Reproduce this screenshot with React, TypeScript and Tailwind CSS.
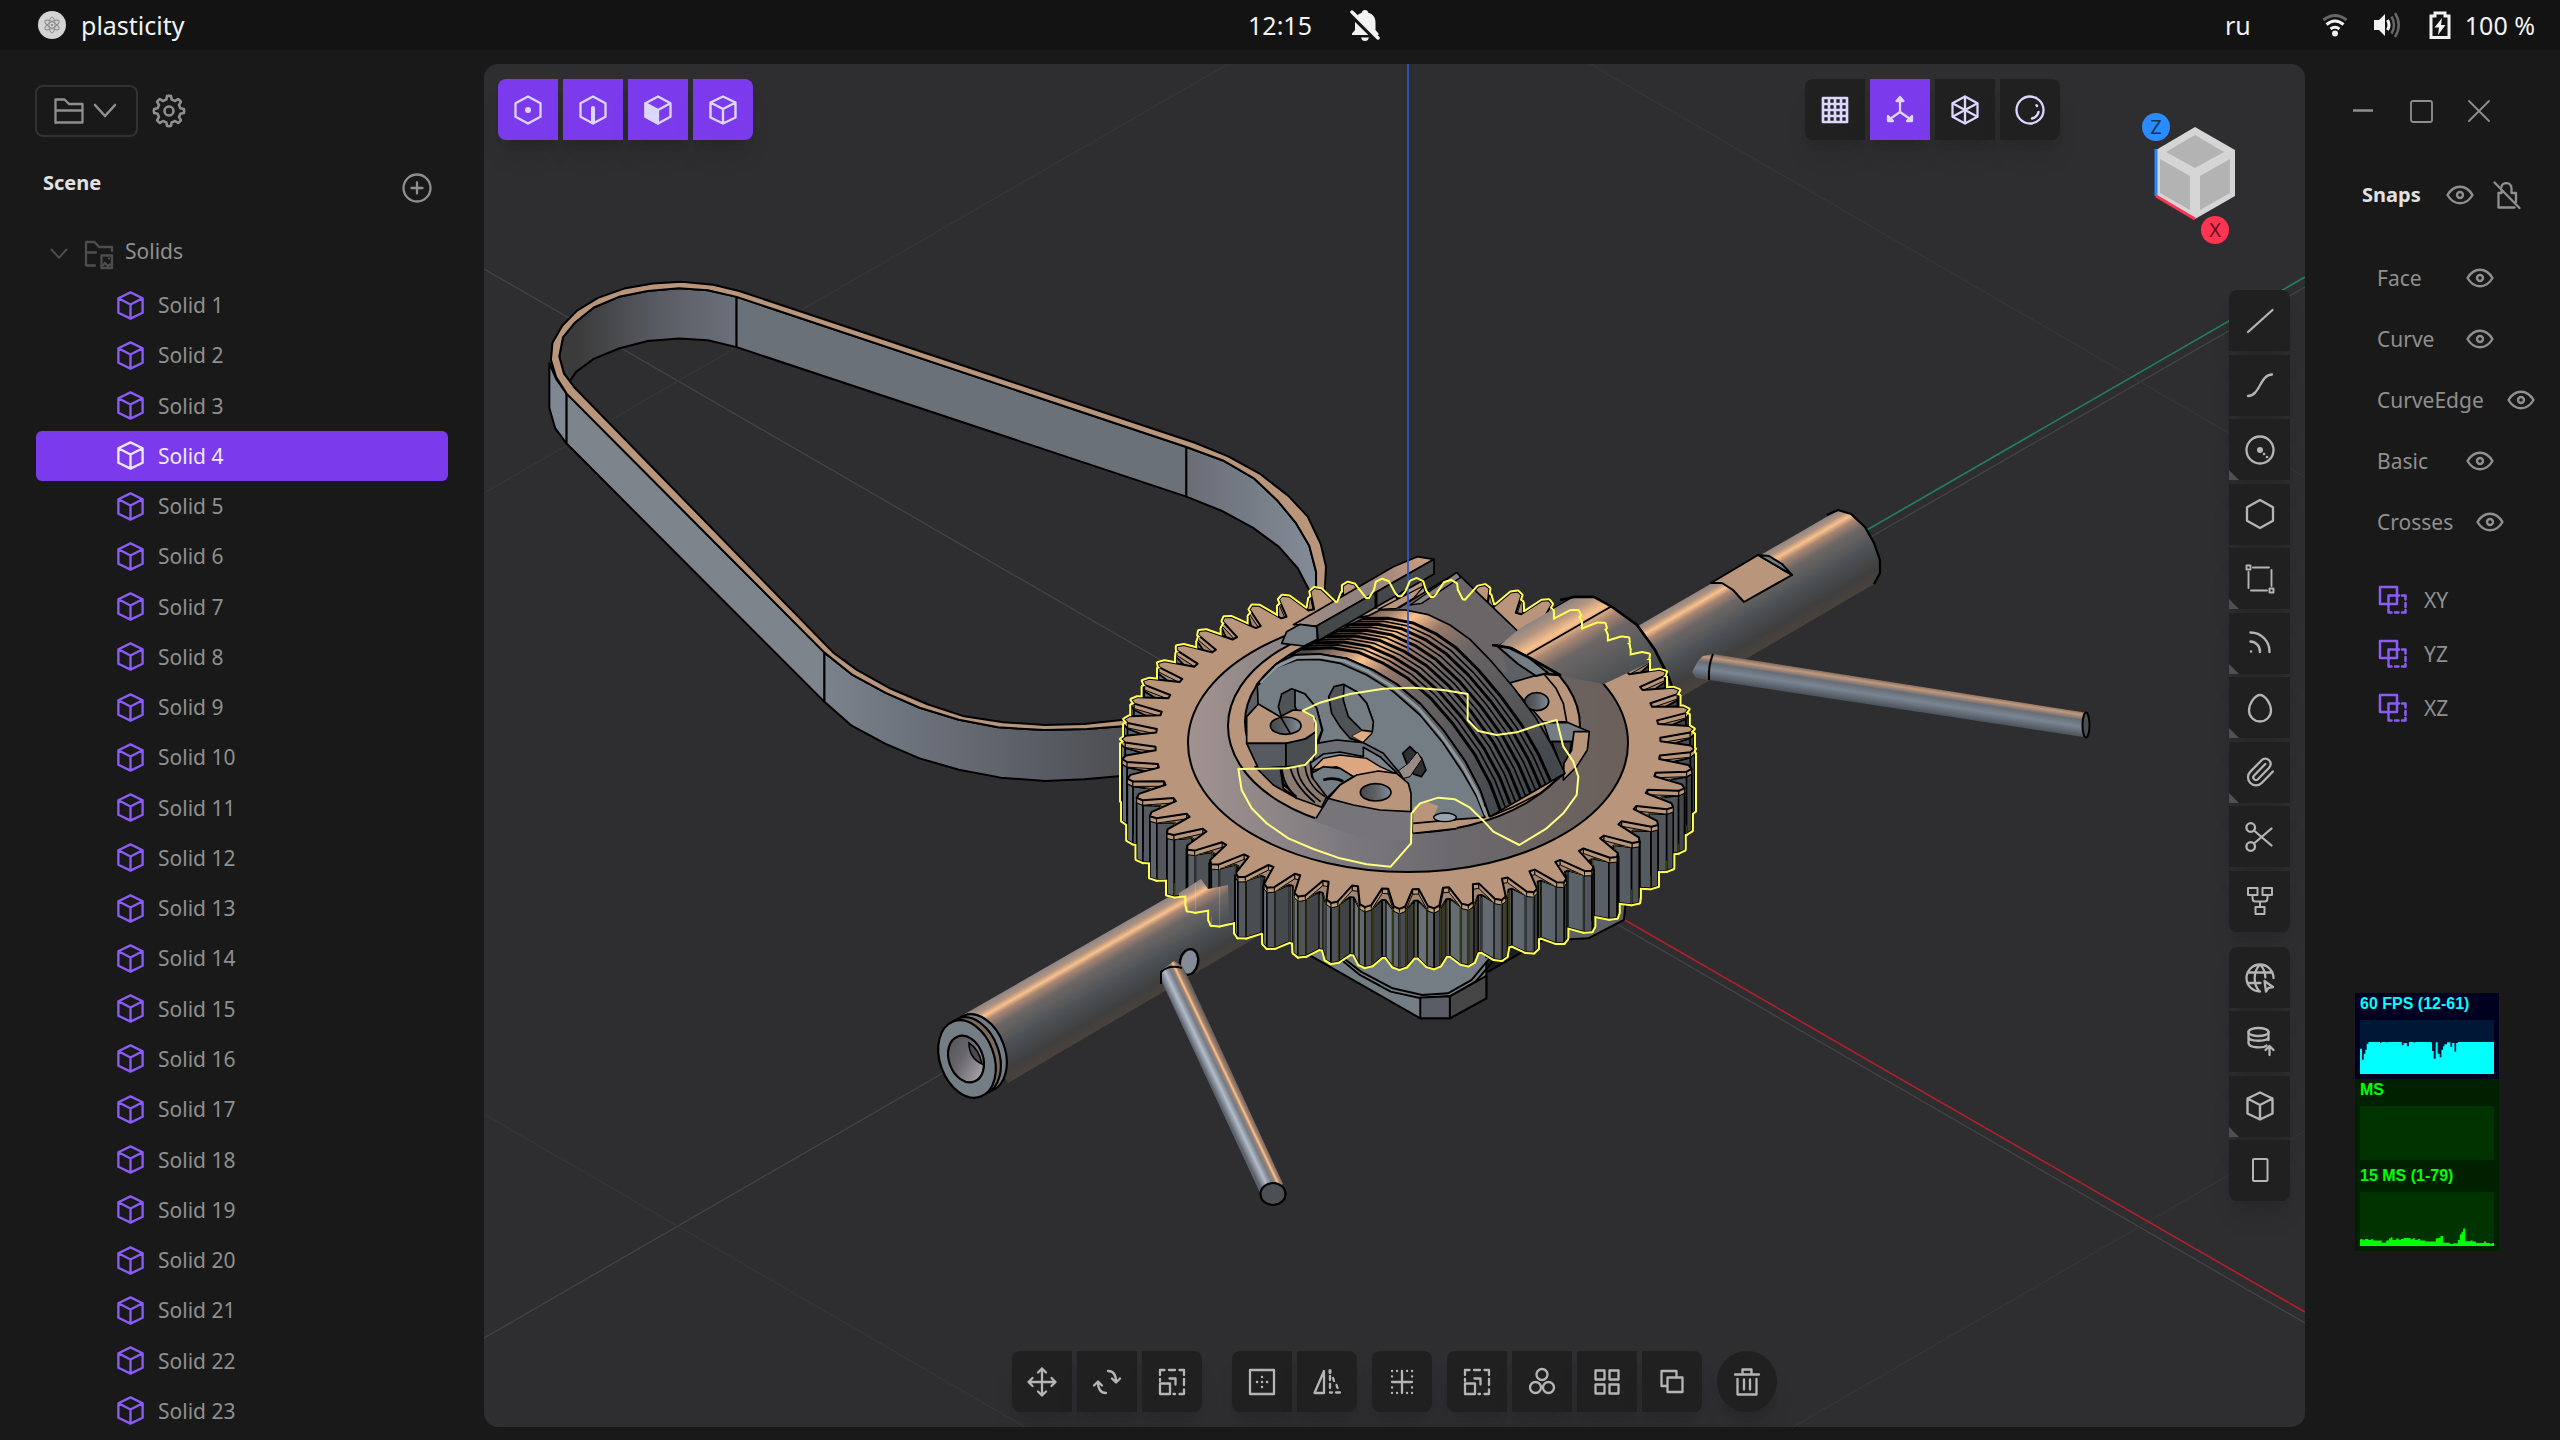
import React from "react";
import { Paperclip } from "lucide-react";

/* ---------- icons, drawn on a 32-unit grid ---------- */

function Ico({ children, className = "size-8", sw = 2.3 }: { children: React.ReactNode; className?: string; sw?: number }) {
  return (
    <svg
      viewBox="0 0 32 32"
      className={className}
      fill="none"
      stroke="currentColor"
      strokeWidth={sw}
      strokeLinecap="round"
      strokeLinejoin="round"
      aria-hidden="true"
    >
      {children}
    </svg>
  );
}

const HEX = "M16 2.500 28.500 9.300v13.400L16 29.500 3.500 22.700V9.300z";

const VertexIcon = () => (
  <Ico>
    <path d={HEX} />
    <circle cx="16" cy="16" r="3" fill="currentColor" stroke="none" />
  </Ico>
);
const EdgeIcon = () => (
  <Ico>
    <path d={HEX} />
    <path d="M16 14v14" strokeWidth="4" />
  </Ico>
);
const FaceIcon = () => (
  <Ico>
    <path d={HEX} />
    <path d="M28 9.500 16 16" />
    <path d="M3.500 9.300 16 16v13.500L3.500 22.700z" fill="currentColor" />
  </Ico>
);
const CubeIcon = ({ className }: { className?: string }) => (
  <Ico className={className} sw={2.4}>
    <path d="M16 2.500 28.500 8.500v15L16 29.500l-12.500-6v-15zM3.500 8.500 16 15l12.500-6.500M16 15v14" />
  </Ico>
);
const GridIcon = () => (
  <Ico sw={2.7}>
    <path d="M4 4h24v24H4zM10 4v24M16 4v24M22 4v24M4 10h24M4 16h24M4 22h24" />
  </Ico>
);
const AxesIcon = () => (
  <Ico>
    <path d="M16 4v14M16 18 4.500 26M16 18l11.500 8" />
    <path d="m12.500 7 3.500-4 3.500 4zM4 22v5h5zM28 22v5h-5z" fill="currentColor" />
  </Ico>
);
const WireIcon = () => (
  <Ico>
    <path d={HEX} />
    <path d="M16 3v26M4 9.500l24 13M28 9.500l-24 13" />
  </Ico>
);
const MatcapIcon = () => (
  <Ico>
    <circle cx="16" cy="16" r="13.500" />
    <path d="M24.500 18a9 9 0 0 1-6.500 6.500M22.500 11.200l.5.800" strokeWidth="2.500" />
  </Ico>
);
const LineIcon = () => (
  <Ico>
    <path d="M4 27 28.500 5" />
  </Ico>
);
const CurveIcon = () => (
  <Ico>
    <path d="M4 27C16 27 16 5.500 28 5.500" />
  </Ico>
);
const CircleIcon = () => (
  <Ico>
    <circle cx="16" cy="16" r="13.500" />
    <circle cx="16" cy="16" r="3" fill="currentColor" stroke="none" />
    <path d="M20 20h.1M23 23h.1" strokeWidth="2.500" />
  </Ico>
);
const PolygonIcon = () => (
  <Ico>
    <path d="M16 2 29 9.300v13.400L16 30 3 22.700V9.300z" />
  </Ico>
);
const RectIcon = () => (
  <Ico sw={1.9}>
    <path d="M2.500 2.500h4v4h-4zM25.500 25.500h4v4h-4zM9 4.500h16M27.500 7v16M23 27.500H7M4.500 25V9" />
  </Ico>
);
const OffsetIcon = () => (
  <Ico>
    <path d="M6.500 5.500A19 19 0 0 1 25.500 25M6.500 14.500A10 10 0 0 1 16 25M7 24.500h.1" strokeWidth="2.400" />
  </Ico>
);
const EggIcon = () => (
  <Ico>
    <path d="M16 3c5 0 11 8.500 11 15.500a11 11 0 0 1-22 0C5 11.500 11 3 16 3z" />
  </Ico>
);
const ScissorsIcon = () => (
  <Ico>
    <circle cx="6.700" cy="6.500" r="4.300" />
    <circle cx="6.700" cy="25.500" r="4.300" />
    <path d="m10 9.500 17.500 15M10 22.500l17.500-15" />
  </Ico>
);
const FlowIcon = () => (
  <Ico sw={2}>
    <path d="M4 3h9.500v7H4zM18.500 3H28v7h-9.500zM11.500 22h9v7h-9zM8.500 10v3q0 3.500 3 3.500h9q3 0 3-3.500v-3M16 16.500V22" />
  </Ico>
);
const GlobeIcon = () => (
  <Ico>
    <path d="M16 29.500A13.500 13.500 0 1 1 29.500 16M16 2.500c-7 7-7 20-.5 27M16 2.500c4 4 5.300 8 5.300 13M4.500 10.500h23M4.500 21h12M20.500 19l8.500 6-4.500.8L22 29.500z" />
  </Ico>
);
const DatabaseIcon = () => (
  <Ico>
    <ellipse cx="14.500" cy="6" rx="10" ry="4" />
    <path d="M4.500 6v11c0 5 15 5.500 18 2.500M24.500 6v8M4.500 11c0 5 20 5 20 0M25.500 29v-8M21.500 24l4-4 4 4" />
  </Ico>
);
const SlabIcon = () => (
  <Ico sw={2}>
    <rect x="9" y="5" width="14.500" height="22" rx="1" />
  </Ico>
);
const MoveIcon = () => (
  <Ico>
    <path d="M16 2.500v27M2.500 16h27M12 6.500l4-4 4 4M12 25.500l4 4 4-4M6.500 12l-4 4 4 4M25.500 12l4 4-4 4" />
  </Ico>
);
const RotateIcon = () => (
  <Ico>
    <path d="M17 5c6 0 8 4 8 11M21 12.500l4 4 4-4M15 27c-6 0-8-4-8-11M3 19.500l4-4 4 4" />
  </Ico>
);
const ScaleIcon = () => (
  <Ico>
    <path d="M4 9V4h4.500M13 4h6M23.500 4H28v5M28 13v6M28 23.500V28h-4.500M17.500 28H19M4 17.500h10V28H4zM4 13v2M13.500 12.500h6v6" />
  </Ico>
);
const ArrangeIcon = () => (
  <Ico>
    <path d="M4 4h24v24H4z" />
    <path d="M16 11v.1M16 16v.1M16 21v.1M11 16h.1M21 16h.1" strokeWidth="2.500" />
  </Ico>
);
const MirrorIcon = () => (
  <Ico>
    <path d="M13 5v22H3.500zM19 10v4M19 18v4M19 26.500h2M25 26.500h4M22 12l1 3M25.500 19l1 3" />
    <path d="M19 4.500v2" strokeWidth="3" />
  </Ico>
);
const SnapGridIcon = () => (
  <Ico>
    <path d="M16 5v22M6 16h20" />
    <path d="M6 5h.1M11 5h.1M21 5h.1M26 5h.1M6 27h.1M11 27h.1M21 27h.1M26 27h.1M6 10.500h.1M26 10.500h.1M6 21.500h.1M26 21.500h.1" />
  </Ico>
);
const CirclesIcon = () => (
  <Ico>
    <circle cx="16" cy="8.500" r="5.500" />
    <circle cx="9.500" cy="21.500" r="5.500" />
    <circle cx="22.500" cy="21.500" r="5.500" />
  </Ico>
);
const TilesIcon = () => (
  <Ico>
    <path d="M4.500 4.500h9v9h-9zM18.500 4.500h9v9h-9zM4.500 18.500h9v9h-9zM18.500 18.500h9v9h-9z" />
  </Ico>
);
const CopyIcon = () => (
  <Ico>
    <path d="M11.500 11.500h15v14.500h-15zM11 20H5.500V5h15v6" />
  </Ico>
);
const TrashIcon = () => (
  <Ico>
    <path d="M4 8.500h24M11.500 8V3.500h9V8M6.500 13v15.500h19V13M13 13.500v10M19 13.500v10" />
  </Ico>
);
const EyeIcon = () => (
  <Ico sw={2.400}>
    <path d="M3.500 16C7 10 11 7.700 16 7.700S25 10 28.500 16C25 22 21 24.300 16 24.300S7 22 3.500 16z" />
    <circle cx="16" cy="16" r="3" />
  </Ico>
);
const LockOffIcon = () => (
  <Ico>
    <path d="M3.500 3.500 28.500 29M10.500 8c0-5 10-6 10 2v4h4.500v9M7.500 14v14.500h16M7.500 14h3M10.500 11v3" />
  </Ico>
);
const FolderIcon = () => (
  <Ico>
    <path d="M2.500 28V4.500h9l4.500 4.500h13.500v18.500h-27M2.500 15.500h27" />
  </Ico>
);
const FolderSceneIcon = () => (
  <Ico>
    <path d="M12 27.500H3V4h8.500l4.500 5h13v4M3 14.500h10M18.500 17.500h10.500V30H18.500zM19 28l3-3 3 3 2-1.500" />
    <path d="M26 20.500h.1" />
  </Ico>
);
const ChevronIcon = ({ className }: { className?: string }) => (
  <Ico className={className}>
    <path d="m6 10 10 11 10-11" strokeWidth="2.600" />
  </Ico>
);
const AddIcon = () => (
  <Ico>
    <circle cx="16" cy="16" r="13.500" />
    <path d="M16 10.500v11M10.500 16h11" />
  </Ico>
);
const PlaneIcon = () => (
  <Ico sw={2.5}>
    <path d="M3 3h17v17H3z" />
    <path d="M11.500 18v-6.500H22M25 11.500h3.500v4M28.500 19v4M28.500 26v2.500H25M21.500 28.500H18M14.500 28.500h-3V25M11.500 23v-2" />
  </Ico>
);

function gearPoints(cx: number, cy: number, rx: number, ry: number, n: number, phase: number, root: number, wr: number, wt: number) {
  const pts: [number, number][] = [];
  const step = (Math.PI * 2) / n;
  for (let i = 0; i < n; i++) {
    const a = phase + i * step;
    for (const [o, r] of [
      [-wr, root],
      [-wt, 0.985],
      [0, 1],
      [wt, 0.985],
      [wr, root],
    ]) {
      const t = a + o * step;
      pts.push([cx + Math.cos(t) * rx * r, cy + Math.sin(t) * ry * r]);
    }
  }
  return pts;
}
const toStr = (p: number[][]) => p.map(([x, y]) => `${x.toFixed(1)},${y.toFixed(1)}`).join(" ");

const SettingsIcon = () => (
  <Ico className="size-9">
    <polygon points={toStr(gearPoints(16, 16, 13.5, 13.5, 8, 0, 0.77, 0.3, 0.17))} />
    <circle cx="16" cy="16" r="4" />
  </Ico>
);

/* ---------- 3D scene ---------- */

const TAN = "#b9967b";
const STEEL = "#757d84";

const CX = 1408;
const CY = 744;

type Wall = { p: number[]; q: number[]; nx: number; ny: number; y: number };
const wallsOf = (pts: number[][]): Wall[] =>
  pts
    .map((p, i) => {
      const q = pts[(i + 1) % pts.length];
      const nx = q[1] - p[1];
      const ny = -(q[0] - p[0]);
      const len = Math.hypot(nx, ny);
      return { p, q, nx: nx / len, ny: ny / len, y: (p[1] + q[1]) / 2 };
    })
    .sort((a, b) => a.y - b.y);
const wallColor = (nx: number, ny: number) => {
  const v = Math.max(0, Math.min(1, 0.42 - nx * 0.6 + Math.abs(ny) * 0.12));
  const c = (a: number, b: number) => Math.round(a + (b - a) * v);
  return `rgb(${c(54, 108)},${c(54, 117)},${c(55, 126)})`;
};
const quad = (w: Wall, depth: number) => toStr([w.p, w.q, [w.q[0], w.q[1] + depth], [w.p[0], w.p[1] + depth]]);

/* thin deep-cut top plate over a thick body whose teeth are shallower */
const PLATE = gearPoints(CX, CY, 287, 165, 52, Math.PI / 2 + 0.03, 0.88, 0.4, 0.17);
const BODY = gearPoints(CX, CY + 5, 287, 163, 52, Math.PI / 2 + 0.03, 0.93, 0.44, 0.2);
const PLATE_WALLS = wallsOf(PLATE);
const BODY_WALLS = wallsOf(BODY);
const BODY_DEPTH = 57;
const PLATE_DEPTH = 5;

const INNER_ARC = [[330, 316], [420, 312], [500, 325], [580, 360], [650, 402], [722, 462], [790, 540], [855, 632], [900, 718], [930, 800]];
const OUTER_ARC = [[600, 180], [675, 180], [745, 194], [810, 225], [870, 268], [935, 335], [1000, 412], [1065, 500], [1115, 585], [1155, 670]];
const RIBS = Array.from({ length: 11 }, (_, k) => {
  const t = 0.14 + k * 0.067;
  return {
    w: k % 2 ? 5 : 9,
    pts: INNER_ARC.map(([x, y], i) => [x + (OUTER_ARC[i][0] - x) * t, y + (OUTER_ARC[i][1] - y) * t]),
  };
});

function Belt() {
  return (
    <g transform="translate(530 260) scale(.523 .3444)" stroke="#000" strokeWidth="2" strokeLinejoin="round">
      <polygon fill="url(#beltIn)" points="395,107 340,88 285,82 225,90 170,107 122,138 85,183 63,225 56,280 65,330 76,352 88,325 122,287 170,257 225,235 285,228 340,233 395,253" vectorEffect="non-scaling-stroke" />
      <polygon fill="#6a7178" points="395,107 1255,543 1255,687 395,253" vectorEffect="non-scaling-stroke" />
      <polygon fill="url(#beltRight)" points="1255,543 1325,582 1385,635 1430,700 1465,765 1490,830 1503,905 1503,1000 1487,950 1468,895 1432,833 1382,777 1322,728 1255,687" vectorEffect="non-scaling-stroke" />
      <polygon fill="#7f8792" points="37,300 50,345 70,388 70,533 48,488 37,430" vectorEffect="non-scaling-stroke" />
      <polygon fill="#7d848c" points="70,388 563,1140 563,1283 70,533" vectorEffect="non-scaling-stroke" />
      <polygon fill="url(#beltOut)" points="563,1140 615,1203 680,1257 745,1300 820,1335 895,1357 985,1365 1065,1362 1180,1348 1180,1492 1060,1508 985,1513 900,1503 820,1480 745,1447 680,1405 615,1352 563,1283" vectorEffect="non-scaling-stroke" />
      <polygon
        fill={TAN}
        vectorEffect="non-scaling-stroke"
        points="40,290 43,240 62,190 90,147 130,110 180,83 235,68 290,63 350,72 400,90 1270,530 1335,570 1395,620 1450,685 1487,745 1512,825 1522,890 1518,1010 1503,1010 1503,905 1490,830 1465,765 1430,700 1385,635 1325,582 1255,543 395,107 340,88 285,82 225,90 170,107 122,138 85,183 63,225 56,280 65,330 85,370 580,1140 625,1190 690,1245 760,1290 830,1325 905,1342 985,1350 1060,1347 1180,1328 1180,1348 1065,1362 985,1365 895,1357 820,1335 745,1300 680,1257 615,1203 563,1140 70,388 50,340"
      />
    </g>
  );
}

function GearShape() {
  return (
    <>
      {BODY_WALLS.map((w, i) => (
        <polygon key={i} points={quad(w, BODY_DEPTH)} />
      ))}
      <polygon points={toStr(BODY)} />
      <polygon points={toStr(PLATE)} />
    </>
  );
}

function Scene() {
  return (
    <svg viewBox="484 64 1821 1363" preserveAspectRatio="xMidYMid slice" className="absolute inset-0 h-full w-full" role="img" aria-label="3D view of a gear assembly">
      <defs>
        <linearGradient id="beltIn"><stop offset=".1" stopColor="#3b3b3b" /><stop offset=".6" stopColor="#5b5e66" /><stop offset="1" stopColor="#6b707a" /></linearGradient>
        <linearGradient id="beltRight"><stop offset="0" stopColor="#696d76" /><stop offset="1" stopColor="#848c97" /></linearGradient>
        <linearGradient id="beltOut"><stop offset="0" stopColor="#7a828b" /><stop offset=".65" stopColor="#5a5d66" /><stop offset="1" stopColor="#4a4a4a" /></linearGradient>
        <linearGradient id="tubeL" gradientUnits="userSpaceOnUse" x1="963" y1="1015" x2="1003" y2="1085">
          <stop offset="0" stopColor="#8d8584" /><stop offset=".08" stopColor="#b39480" /><stop offset=".14" stopColor="#fac18c" /><stop offset=".2" stopColor="#a98672" /><stop offset=".32" stopColor="#6d6766" /><stop offset=".6" stopColor="#4b5054" /><stop offset=".85" stopColor="#403f3f" /><stop offset="1" stopColor="#4a423c" />
        </linearGradient>
        <linearGradient id="tubeR" gradientUnits="userSpaceOnUse" x1="1835" y1="512" x2="1876" y2="583">
          <stop offset="0" stopColor="#8d8584" /><stop offset=".07" stopColor="#b39480" /><stop offset=".13" stopColor="#fac18c" /><stop offset=".2" stopColor="#a98672" /><stop offset=".32" stopColor="#6d6766" /><stop offset=".6" stopColor="#4b5054" /><stop offset=".85" stopColor="#403f3f" /><stop offset="1" stopColor="#4a423c" />
        </linearGradient>
        <linearGradient id="hub" gradientUnits="userSpaceOnUse" x1="1574" y1="597" x2="1641" y2="713">
          <stop offset="0" stopColor="#8d8584" /><stop offset=".08" stopColor="#b39480" /><stop offset=".17" stopColor="#fac18c" /><stop offset=".26" stopColor="#a98672" /><stop offset=".36" stopColor="#6d6766" /><stop offset=".7" stopColor="#4b5054" /><stop offset="1" stopColor="#403f3f" />
        </linearGradient>
        <linearGradient id="rodB" gradientUnits="userSpaceOnUse" x1="1161" y1="980" x2="1184" y2="969">
          <stop offset="0" stopColor="#5c636d" /><stop offset=".28" stopColor="#b4bcc9" /><stop offset=".5" stopColor="#747b86" /><stop offset=".62" stopColor="#9c8375" /><stop offset=".7" stopColor="#ffc48c" /><stop offset=".78" stopColor="#a58470" /><stop offset="1" stopColor="#5a5350" />
        </linearGradient>
        <linearGradient id="rodR" gradientUnits="userSpaceOnUse" x1="1713" y1="654" x2="1709" y2="680">
          <stop offset="0" stopColor="#77695f" /><stop offset=".15" stopColor="#c2987c" /><stop offset=".35" stopColor="#686d75" /><stop offset=".6" stopColor="#7a8592" /><stop offset="1" stopColor="#4b5058" />
        </linearGradient>
        <linearGradient id="cone"><stop offset="0" stopColor="#a29390" /><stop offset=".35" stopColor="#7d7a7f" /><stop offset=".6" stopColor="#6b696d" /><stop offset="1" stopColor="#6b5f59" /></linearGradient>
        <linearGradient id="drum" gradientUnits="userSpaceOnUse" x1="400" y1="290" x2="864" y2="848">
          <stop offset="0" stopColor="#4c4846" /><stop offset=".1" stopColor="#a98672" /><stop offset=".17" stopColor="#fac18c" /><stop offset=".27" stopColor="#97796a" /><stop offset=".42" stopColor="#6a6465" /><stop offset="1" stopColor="#43484c" />
        </linearGradient>
        <linearGradient id="lever" gradientUnits="userSpaceOnUse" x1="380" y1="230" x2="740" y2="20"><stop offset="0" stopColor="#a38d82" /><stop offset=".5" stopColor="#8c8080" /><stop offset="1" stopColor="#cd9f7c" /></linearGradient>
        <linearGradient id="bore"><stop offset="0" stopColor="#45484a" /><stop offset=".5" stopColor="#5d6167" /><stop offset="1" stopColor="#858d99" /></linearGradient>
        <linearGradient id="tubeBore" x1="0" y1="0" x2=".6" y2="1"><stop offset="0" stopColor="#54504e" /><stop offset=".5" stopColor="#66666c" /><stop offset="1" stopColor="#a39ea3" /></linearGradient>
        <mask id="halo" maskUnits="userSpaceOnUse" x="1100" y="560" width="620" height="440">
          <g fill="#fff" stroke="#fff" strokeWidth="4" strokeLinejoin="round">
            <GearShape />
          </g>
          <g fill="#000">
            <ellipse cx={CX} cy={CY + 30} rx="240" ry="130" />
            <GearShape />
          </g>
        </mask>
      </defs>

      {/* ground grid */}
      <g stroke="#444447" strokeWidth="1.3">
        <path d="M484 269 1180 671M1610 920 2305 1323M1869 538 2305 287M484 1338 950 1069" />
        <path d="M484 493 1228 64M1590 64 2305 477M484 1114 1025 1427M1793 1427 2305 1131" stroke="#363638" />
      </g>
      <path d="M2305 277 1860 534" stroke="#23805f" strokeWidth="1.600" />
      <path d="M1604 908 2305 1312" stroke="#b21f2b" strokeWidth="1.600" />

      <Belt />

      {/* shaft, right half */}
      <g strokeLinejoin="round">
        <polygon fill="url(#tubeR)" points="1600,648 1835,512 1839,510 1851,514 1865,527 1874,545 1880,565 1879,577 1874,584 1676,700 1600,740" />
        <polyline fill="none" stroke="#000" strokeWidth="2.200" points="1827,515 1838,510 1851,514 1865,527 1874,543 1880,560 1880,573 1874,584" />
        <polygon fill={TAN} stroke="#000" strokeWidth="2" points="1711,583 1758,555 1792,575 1744,602 1733,590 1722,583" />
        <polygon fill={STEEL} stroke="#000" strokeWidth="2" points="1758,555 1769,556 1782,564 1792,575" />
      </g>

      {/* mounting bracket below the gear */}
      <g transform="translate(1100 540) scale(.3954 .3333)" stroke="#000" strokeWidth="2" strokeLinejoin="round">
        <polygon fill="#5e6266" points="1150,1200 1235,1195 1325,1140 1330,1080 1150,1100" vectorEffect="non-scaling-stroke" />
        <polygon fill="#1c1d1e" points="960,1310 1150,1180 1050,1150 900,1200" vectorEffect="non-scaling-stroke" />
        <polygon fill={STEEL} points="500,1225 810,1435 885,1435 977,1375 977,1200 800,1100" vectorEffect="non-scaling-stroke" />
        <polyline fill={STEEL} points="600,1240 660,1295 740,1345 815,1365 880,1360 940,1320 985,1255" vectorEffect="non-scaling-stroke" />
        <polyline fill="none" points="590,1240 655,1303 735,1355 812,1375 885,1369 950,1325 1000,1255" vectorEffect="non-scaling-stroke" />
        <polygon fill="#5a5c66" points="810,1373 885,1369 885,1435 810,1435" vectorEffect="non-scaling-stroke" />
        <polygon fill="#454545" points="885,1369 977,1308 977,1375 885,1435" vectorEffect="non-scaling-stroke" />
      </g>

      {/* shaft, left half */}
      <polygon fill="url(#tubeL)" points="963,1015 1240,856 1300,912 1255,938 1008,1083 990,1050" />

      {/* hub end behind the teeth */}
      <polyline fill="url(#hub)" stroke="#000" strokeWidth="2.400" points="1519,629 1574,597 1594,597 1612,607 1637,625 1655,650 1668,675 1674,692 1600,740" />

      {/* gear */}
      <g stroke="#000" strokeWidth="1.600" strokeLinejoin="round">
        {BODY_WALLS.map((w, i) => (<polygon key={i} points={quad(w, BODY_DEPTH)} fill={wallColor(w.nx, w.ny)} />))}
        <polygon points={toStr(BODY)} fill="#a48570" />
        {PLATE_WALLS.map((w, i) => (<polygon key={i} points={quad(w, PLATE_DEPTH)} fill={TAN} stroke="#000" strokeWidth="1" />))}
        <polygon points={toStr(PLATE)} fill={TAN} strokeWidth="2" />
      </g>
      <polygon fill="url(#tubeL)" points="1179,893 1201,879 1208,889 1228,885 1230,935 1215,940 1179,924" />
      <ellipse cx={CX} cy="743" rx="220" ry="129" fill="url(#cone)" stroke="#000" strokeWidth="2" />
      <ellipse cx={CX - 4} cy="726" rx="176" ry="107" fill={TAN} stroke="#000" strokeWidth="2" />
      <ellipse cx={CX - 4} cy="722" rx="159" ry="97" fill="#5d6166" stroke="#000" strokeWidth="2" />

      <g transform="translate(1180 550) scale(.33333)" stroke="#000" strokeWidth="5" strokeLinejoin="round">
        {/* rear plate and right lug */}
        <polygon fill={TAN} points="985,400 1090,370 1128,415 1150,460 1160,515 1090,517 1050,470" />
        <ellipse cx="1070" cy="455" rx="36" ry="27" fill="url(#bore)" />
        <polygon fill={STEEL} points="1090,517 1165,518 1228,545 1175,575 1110,575" />
        <polygon fill="#3c3d3e" points="1115,575 1175,575 1160,660 1150,665" />
        <polygon fill={TAN} points="1182,545 1228,545 1222,600 1190,650 1150,690 1152,640 1175,600" />
        <polygon fill="#6a6566" stroke="none" points="655,175 830,68 1020,250 960,285 985,370 760,300" />
        <polyline fill="none" points="655,175 830,68 1020,250 960,285" />
        <polygon fill="#87807f" points="690,165 830,68 842,82 725,160" strokeWidth="4" />

        {/* disc face */}
        <polygon fill={STEEL} points="232,408 290,352 350,330 415,328 480,340 560,375 640,425 720,495 790,580 850,670 890,740 915,802 830,808 700,820 560,800 440,780 330,700 235,480" />
        <polygon fill="url(#drum)" points={toStr([...INNER_ARC, ...[...OUTER_ARC].reverse()])} />
        {RIBS.map((r, i) => (<polyline key={i} points={toStr(r.pts)} fill="none" strokeWidth={r.w} />))}
        <polyline fill="none" stroke="#8f989d" strokeWidth="9" points="240,398 290,350 350,322 420,320 490,332 565,365 640,412 715,475 785,558 848,648 892,728 918,795" />
        <polyline fill="none" points="228,405 290,340 345,314 420,312 500,325 580,360 650,402 722,462 790,540 855,632 900,718 928,800" />
        <polyline fill="none" points="930,800 1000,770 1080,730 1155,670" />

        {/* openings in the disc */}
        <polygon fill="#505356" points="295,470 305,432 335,416 375,432 410,475 428,540 415,580 360,560 310,520" />
        <polygon fill={STEEL} points="345,420 375,432 410,475 426,540 412,575 380,540 345,470" />
        <polygon fill="#505356" points="446,440 462,410 490,403 530,425 560,460 580,515 575,550 548,577 510,565 480,530 455,490" />
        <polygon fill={STEEL} points="492,404 530,425 560,460 580,515 577,545 545,540 505,500 490,450" />
        <polygon fill="#e0ac82" points="515,558 545,542 577,547 548,577" strokeWidth="2" />
        <polygon fill="#2f3032" points="668,610 690,590 725,625 738,660 724,680 700,672 680,640" />
        <polygon fill="#9a8a86" points="645,670 685,640 712,606 725,628 690,680 660,688" strokeWidth="3" />

        {/* planet stage */}
        <polygon fill="#6b6f73" points="410,580 470,570 550,578 610,610 660,670 690,720 560,700 440,745 390,690" />
        <polygon fill="#7c858c" points="390,640 430,612 480,606 550,620 550,592 600,620 650,668 560,670 420,720" />
        <polygon fill="#dca780" points="395,660 430,625 480,615 560,625 600,650 640,668 560,672 520,680 470,650" strokeWidth="4" />
        <polygon fill={STEEL} points="395,670 430,650 480,655 520,680 480,705 440,745 405,710" />
        <path fill="none" d="M430 690q35-10 60 5" strokeWidth="8" />
        <polygon fill="#8a7a70" points="300,640 390,630 395,680 440,740 425,772 350,745 310,700" />
        <path fill="none" d="M305 650q5 60 45 90M330 648q10 55 75 110M352 650q0 50 70 105M375 645q5 60 60 95" />
        <polygon fill="#4e5257" points="225,650 300,650 310,715 350,745 280,705" />

        {/* left lug */}
        <polygon fill={TAN} points="200,500 235,462 300,500 340,480 370,482 405,505 408,545 370,570 318,580 200,580" />
        <ellipse cx="317" cy="527" rx="46" ry="26" fill="url(#bore)" />
        <path d="m303 503 28 48" />
        <polygon fill="#575a60" points="200,580 318,580 318,650 235,655" />
        <polygon fill="#4b4e51" points="318,580 380,566 408,545 408,610 370,648 318,650" />

        {/* front lug and skirt */}
        <polygon fill="#77757a" stroke="none" points="445,748 520,768 600,780 697,788 697,870 560,870 400,812" />
        <path fill="none" d="M445 745 408 805M697 785v65" />
        <polygon fill={TAN} points="445,745 480,705 530,675 595,663 650,670 685,700 693,730 693,785 600,780 520,765" />
        <ellipse cx="587" cy="727" rx="46" ry="26" fill="url(#bore)" />
        <polygon fill={TAN} stroke="none" points="700,770 740,755 775,768 760,800 775,815 830,812 830,837 700,850" />
        <path fill="none" d="M700 820 830 808M700 850l130-14" />
        <ellipse cx="795" cy="802" rx="34" ry="13" fill="#9aa2ad" strokeWidth="4" />

        {/* lever */}
        <polygon fill="url(#lever)" points="340,224 410,228 762,28 712,20 640,50" />
        <polygon fill="#45484a" points="410,228 762,28 762,72 590,170 415,272" />
        <path fill="none" d="M588 128v48" strokeWidth="9" />
        <polygon fill={STEEL} points="305,280 320,245 360,223 410,230 412,268 372,288" />
        <polygon fill={TAN} points="595,178 735,105 700,145 650,175" strokeWidth="4" />
      </g>

      {/* hub front */}
      <g strokeLinejoin="round">
        <polygon fill="url(#hub)" points="1500,645 1519,629 1574,597 1594,597 1612,607 1634,624 1649,643 1655,660 1604,684 1566,677 1548,674 1527,655" />
        <polyline fill="none" stroke="#000" strokeWidth="2.400" points="1560,600 1574,597 1594,597 1612,607 1637,625 1655,650 1668,677" />
        <path d="M1527 655 1612 606" fill="none" stroke="#000" strokeWidth="2" />
        <polygon fill={STEEL} stroke="#000" strokeWidth="2" points="1496,645 1512,648 1528,657 1548,673 1536,676 1518,664" />
        <path d="m1492 645 18 3 20 10 30 17-14-1" fill="none" stroke="#000" strokeWidth="2.600" />
      </g>

      {/* cross rods */}
      <polygon fill="url(#rodR)" points="1692,672 1698,661 1703,656 1713,654 2088,713 2083,737 1709,680 1696,678" />
      <path d="M1713 654q-5 12-4 26" fill="none" stroke="#000" strokeWidth="2" />
      <ellipse cx="2086" cy="725" rx="3.500" ry="12.500" fill="#4c4f52" stroke="#000" strokeWidth="2" />

      <ellipse cx="1189" cy="962" rx="9" ry="13" transform="rotate(12 1189 962)" fill="#848c97" stroke="#000" strokeWidth="2.400" />
      <polygon fill="url(#rodB)" points="1161,980 1162,970 1174,961 1182,966 1186,973 1283,1184 1262,1197" />
      <path d="M1161 984v-12q8-8 21-4" fill="none" stroke="#000" strokeWidth="2" />
      <ellipse cx="1273" cy="1194" rx="12.500" ry="11" fill="#4c5054" stroke="#000" strokeWidth="2.200" />

      {/* hollow shaft end */}
      <g stroke="#000" strokeWidth="2.200">
        <ellipse cx="978" cy="1053" rx="27" ry="40" transform="rotate(-20 978 1053)" fill={STEEL} />
        <ellipse cx="972" cy="1056" rx="27" ry="40" transform="rotate(-20 972 1056)" fill="#7a6a5f" />
        <ellipse cx="967" cy="1059" rx="27" ry="40" transform="rotate(-20 967 1059)" fill={STEEL} />
        <ellipse cx="966" cy="1059" rx="17" ry="24" transform="rotate(-20 966 1059)" fill="url(#tubeBore)" />
        <path fill="#4a4a4c" strokeWidth="1.600" d="M969 1043q0 15 13 21-3-15-13-21z" />
      </g>

      <path d="M1408 64V652" stroke="#3557bd" strokeWidth="1.800" />

      {/* selection outline */}
      <rect x="1100" y="560" width="620" height="440" fill="#ffff54" mask="url(#halo)" />
      <polygon
        transform="translate(1180 550) scale(.33333)"
        fill="none"
        stroke="#ffff80"
        strokeWidth="6"
        strokeLinejoin="round"
        points="175,657 320,655 375,645 408,610 408,520 400,500 368,482 420,458 510,432 610,416 700,413 790,420 863,432 863,510 895,543 950,555 1010,547 1075,525 1130,510 1150,590 1180,635 1195,680 1190,735 1150,790 1100,835 1018,885 940,845 910,812 870,773 825,748 775,743 720,760 695,790 693,880 632,950 560,943 480,925 400,897 325,865 260,820 215,775 185,720"
      />
    </svg>
  );
}

/* ---------- toolbars ---------- */

type Tool = { label: string; icon: React.ReactNode; on?: boolean; more?: boolean };

function ToolGroup({ tools, vertical = false, tint = false, className = "" }: { tools: Tool[]; vertical?: boolean; tint?: boolean; className?: string }) {
  return (
    <div role="toolbar" className={`flex ${vertical ? "flex-col justify-between" : "gap-[5px]"} ${className}`}>
      {tools.map((t, i) => {
        const round = vertical
          ? `${i === 0 ? "rounded-t-lg" : ""} ${i === tools.length - 1 ? "rounded-b-lg" : ""}`
          : `${i === 0 ? "rounded-l-lg" : ""} ${i === tools.length - 1 ? "rounded-r-lg" : ""}`;
        return (
          <button
            key={t.label}
            type="button"
            aria-label={t.label}
            aria-pressed={!!t.on}
            className={`relative flex h-[61px] items-center justify-center overflow-hidden shadow-xl ${vertical ? "w-[61px]" : "w-[60px]"} ${round} ${t.on ? "bg-[#7c3aed]" : "bg-[#202020]"} ${tint ? "text-[#ddd6fe]" : "text-[#b5b5b5]"}`}
          >
            {t.icon}
            {t.more && (
              <svg viewBox="0 0 10 10" className="absolute bottom-0 left-0 size-[10px] fill-[#505050]" aria-hidden="true">
                <path d="M0 0 10 10H0z" />
              </svg>
            )}
          </button>
        );
      })}
    </div>
  );
}

const selectTools: Tool[] = [
  { label: "Control points", icon: <VertexIcon />, on: true },
  { label: "Edges", icon: <EdgeIcon />, on: true },
  { label: "Faces", icon: <FaceIcon />, on: true },
  { label: "Solids", icon: <CubeIcon />, on: true },
];
const viewTools: Tool[] = [
  { label: "Grid", icon: <GridIcon /> },
  { label: "Orthographic", icon: <AxesIcon />, on: true },
  { label: "X-ray", icon: <WireIcon /> },
  { label: "Render mode", icon: <MatcapIcon /> },
];
const drawTools: Tool[] = [
  { label: "Line", icon: <LineIcon /> },
  { label: "Curve", icon: <CurveIcon /> },
  { label: "Circle", icon: <CircleIcon />, more: true },
  { label: "Polygon", icon: <PolygonIcon /> },
  { label: "Rectangle", icon: <RectIcon />, more: true },
  { label: "Offset", icon: <OffsetIcon />, more: true },
  { label: "Sphere", icon: <EggIcon />, more: true },
  { label: "Pipe", icon: <Paperclip className="size-8" strokeWidth={1.7} />, more: true },
  { label: "Trim", icon: <ScissorsIcon /> },
  { label: "Bridge", icon: <FlowIcon /> },
];
const solidTools: Tool[] = [
  { label: "Sphere primitive", icon: <GlobeIcon /> },
  { label: "Extrude", icon: <DatabaseIcon /> },
  { label: "Box", icon: <CubeIcon />, more: true },
  { label: "Slab", icon: <SlabIcon /> },
];

function ViewCube() {
  return (
    <svg viewBox="0 0 100 140" className="absolute top-[41px] right-[64px] h-[140px] w-[100px]" role="img" aria-label="View orientation">
      <path d="M54 22 94 45v46l-40 23-39-23V45z" fill="#d5d5d5" />
      <path d="M54 30 83 47 54 63 25 47zM19 54l30 17v34L19 88zM89 54 59 71v34l30-17z" fill="#b3b3b3" />
      <path d="M15 44v47" stroke="#2a86ff" strokeWidth="3" />
      <path d="m15 91 39 23" stroke="#ff3352" strokeWidth="3" />
      <circle cx="15" cy="22" r="14" fill="#2a8bff" />
      <circle cx="74" cy="125" r="14" fill="#ff3352" />
      <text x="15" y="29" textAnchor="middle" fontSize="20" fill="#10365f" fontFamily="Noto Sans, sans-serif">Z</text>
      <text x="74" y="132" textAnchor="middle" fontSize="20" fill="#5f1320" fontFamily="Noto Sans, sans-serif">X</text>
    </svg>
  );
}

/* ---------- performance meters ---------- */

function Meter({ label, box, plot, ink, graph }: { label: string; box: string; plot: string; ink: string; graph: string }) {
  return (
    <div className={`flex h-[86px] flex-col px-[5px] ${box}`}>
      <div className={`h-[27px] pt-[2px] font-['Liberation_Sans',Arial,sans-serif] text-[16px] leading-[18px] font-bold whitespace-nowrap ${ink}`}>{label}</div>
      <svg viewBox="0 0 400 160" preserveAspectRatio="none" className={`h-[54px] w-full ${plot}`} aria-hidden="true">
        <path d={graph} fill="currentColor" className={ink} />
      </svg>
    </div>
  );
}

const FPS =
  "M0 160V85H6V118H11V100H16V88H20V70H25V65H60V68H64V65H78V67H82V65H125V75H130V68H140V78H146V65H160V67H165V65H212V67H215V92H220V115H226V66H232V100H238V110H243V88H248V78H252V72H260V66H270V80H275V68H282V94H287V68H292V65H400V160z";
const MS =
  "M0 160V140H10V143H15V139H25V142H32V140H40V144H65V150H78V144H86V138H92V134H97V142H108V138H116V142H122V139H130V136H150V140H158V137H164V142H172V139H180V144H195V147H226V138H232V136H240V130H248V150H268V154H278V152H292V142H298V125H303V118H308V108H314V146H330V144H336V147H346V151H370V147H376V151H388V153H394V151H400V160z";

/* ---------- page ---------- */

const solids = Array.from({ length: 23 }, (_, i) => `Solid ${i + 1}`);
const snaps = ["Face", "Curve", "CurveEdge", "Basic", "Crosses"];
const planes = ["XY", "YZ", "XZ"];

export default function App() {
  return (
    <div className="flex min-h-screen flex-col bg-[#191919] font-['Noto_Sans',sans-serif] text-[21px] leading-6 text-[#8f8f8f]">
      <header className="grid h-[50px] shrink-0 grid-cols-[1fr_auto_1fr] items-center bg-[#131313] px-[25px] text-[25px] leading-8 text-[#f2f2f2]">
        <div className="flex items-center gap-[15px] pl-[13px]">
          <svg viewBox="0 0 28 28" className="size-7" aria-hidden="true">
            <circle cx="14" cy="14" r="14" fill="#d4d4d4" />
            <g fill="none" stroke="#8c8c8c">
              <ellipse cx="14" cy="14" rx="3" ry="8" />
              <ellipse cx="14" cy="14" rx="3" ry="8" transform="rotate(60 14 14)" />
              <ellipse cx="14" cy="14" rx="3" ry="8" transform="rotate(-60 14 14)" />
            </g>
            <circle cx="14" cy="14" r="1" fill="#777" />
          </svg>
          <span>plasticity</span>
        </div>
        <time>12:15</time>
        <div className="flex items-center justify-end">
          <svg viewBox="0 0 30 32" className="mr-auto ml-[38px] h-8 w-[30px]" aria-hidden="true">
            <path d="M15 1c2 0 3 1 3 2.500 5 1.500 7.500 5 7.500 10V21l3 3.500V26H2v-1.500L5 21v-7.500C5 8.500 7.500 5 12 3.500 12 2 13 1 15 1zM11 28.500h8q-1 3.500-4 3.500t-4-3.500z" fill="#f2f2f2" />
            <path d="M1 5.500 27 31" stroke="#131313" strokeWidth="5" />
            <path d="M2 3 28 29" stroke="#f2f2f2" strokeWidth="3.500" strokeLinecap="round" />
          </svg>
          <span className="mr-[71px]">ru</span>
          <svg viewBox="0 0 26 26" className="mr-[25px] size-[26px]" fill="none" stroke="#f2f2f2" strokeWidth="3" aria-hidden="true">
            <path d="M1.500 8q11.500-9 23 0" stroke="#666" />
            <path d="M4.500 12.500q8.500-7 17 0M8.500 17q4.500-3.500 9 0" />
            <circle cx="13" cy="21.500" r="3" fill="#f2f2f2" stroke="none" />
          </svg>
          <svg viewBox="0 0 28 26" className="mr-[28px] h-[26px] w-7" fill="none" aria-hidden="true">
            <path d="M1 8h5l6-6v22l-6-6H1z" fill="#f2f2f2" />
            <path d="M14.500 8q3 5 0 10" stroke="#f2f2f2" strokeWidth="3" />
            <path d="M18.500 4.500q5 8.500 0 17M22 1q7.500 12 0 24" stroke="#666" strokeWidth="2.500" />
          </svg>
          <svg viewBox="0 0 22 28" className="mr-[14px] h-7 w-[22px]" fill="none" aria-hidden="true">
            <path d="M2 5h4V2h10v3h4v21.500H2z" stroke="#f2f2f2" strokeWidth="3" />
            <path d="M13 7 5.500 16.500H10L9 24l7.500-10H12z" fill="#f2f2f2" />
          </svg>
          <span>100 %</span>
        </div>
      </header>

      <div className="grid flex-1 grid-cols-[484px_minmax(0,1fr)_255px]">
        <aside className="flex flex-col px-9 pb-1">
          <div className="-ml-px mt-[35px] flex items-center gap-[13px]">
            <button type="button" aria-label="File menu" className="flex h-[52px] w-[103px] items-center justify-center gap-1 rounded-lg border-2 border-[#323232]">
              <FolderIcon />
              <ChevronIcon className="size-8" />
            </button>
            <button type="button" aria-label="Settings"><SettingsIcon /></button>
          </div>
          <div className="mt-[30px] flex items-start justify-between pr-[15px] pl-[7px]">
            <h2 className="mt-[4px] text-[20px] font-bold text-[#e2e2e2]">Scene</h2>
            <button type="button" aria-label="New group" className="mt-[5px]"><AddIcon /></button>
          </div>
          <button type="button" className="mt-[27px] flex h-[42px] items-center pl-[11px] text-[#8f8f8f]">
            <span className="mt-1 text-[#4d4d4d]"><ChevronIcon className="size-6" /></span>
            <span className="mt-1 ml-[12px] text-[#4d4d4d]"><FolderSceneIcon /></span>
            <span className="mb-[2px] ml-[10px]">Solids</span>
          </button>
          <ul className="mt-[7px] flex flex-1 flex-col justify-between">
            {solids.map((s, i) => (
              <li key={s}>
                <button type="button" className={`flex h-[50px] w-full items-center gap-[12px] rounded-md pl-[79px] ${i === 3 ? "bg-[#7c3aed] text-[#ede9fe]" : ""}`}>
                  <span className={i === 3 ? "text-[#ede9fe]" : "text-[#8b5cf6]"}><CubeIcon className="size-[31px]" /></span>
                  <span>{s}</span>
                </button>
              </li>
            ))}
          </ul>
        </aside>

        <main className="relative mt-[14px] mb-[13px] overflow-hidden rounded-[14px] bg-[#2e2e30]">
          <Scene />
          <ToolGroup tools={selectTools} tint className="absolute top-[15px] left-[14px]" />
          <ToolGroup tools={viewTools} tint className="absolute top-[15px] right-[245px]" />
          <ViewCube />
          <div className="absolute top-[226px] right-[15px] flex flex-col gap-[15px]">
            <ToolGroup tools={drawTools} vertical className="h-[642px]" />
            <ToolGroup tools={solidTools} vertical className="h-[254px]" />
          </div>
          <div className="absolute inset-x-0 bottom-[15px] flex justify-center gap-[15px]">
            <ToolGroup
              className="mr-[15px]"
              tools={[
                { label: "Move", icon: <MoveIcon /> },
                { label: "Rotate", icon: <RotateIcon /> },
                { label: "Scale", icon: <ScaleIcon /> },
              ]}
            />
            <ToolGroup tools={[{ label: "Shell", icon: <ArrangeIcon /> }, { label: "Mirror", icon: <MirrorIcon /> }]} />
            <ToolGroup tools={[{ label: "Align", icon: <SnapGridIcon /> }]} />
            <ToolGroup
              tools={[
                { label: "Free scale", icon: <ScaleIcon /> },
                { label: "Radial array", icon: <CirclesIcon /> },
                { label: "Array", icon: <TilesIcon /> },
                { label: "Duplicate", icon: <CopyIcon /> },
              ]}
            />
            <button type="button" aria-label="Delete" className="flex h-[61px] w-[60px] items-center justify-center rounded-full bg-[#202020] text-[#b5b5b5] shadow-xl">
              <TrashIcon />
            </button>
          </div>
        </main>

        <aside className="flex flex-col">
          <div className="mt-[45px] ml-[42px] flex gap-[26px]">
            <button type="button" aria-label="Minimize"><Ico><path d="M6 15.500h20" strokeLinecap="butt" strokeWidth="2.500" /></Ico></button>
            <button type="button" aria-label="Maximize"><Ico sw={1.8}><rect x="6" y="6" width="21" height="21" rx="2" /></Ico></button>
            <button type="button" aria-label="Close"><Ico sw={1.8}><path d="m6 6 20 20M26 6 6 26" /></Ico></button>
          </div>
          <div className="mt-[52px] ml-[57px] flex items-center">
            <h2 className="w-[82px] text-[20px] font-bold text-[#e2e2e2]">Snaps</h2>
            <button type="button" aria-label="Toggle all snaps"><EyeIcon /></button>
            <button type="button" aria-label="Unlock snaps" className="ml-[15px]"><LockOffIcon /></button>
          </div>
          <ul className="mt-[36px] ml-[72px]">
            {snaps.map((s) => (
              <li key={s} className="flex h-[61px] items-center">
                <span className="min-w-[66px]">{s}</span>
                <button type="button" aria-label={`Toggle ${s}`} className="ml-[21px]"><EyeIcon /></button>
              </li>
            ))}
          </ul>
          <ul className="mt-[21px] ml-[72px]">
            {planes.map((p) => (
              <li key={p}>
                <button type="button" className="flex h-[54px] items-center gap-[15px]">
                  <span className="text-[#8b5cf6]"><PlaneIcon /></span>
                  <span>{p}</span>
                </button>
              </li>
            ))}
          </ul>
          <div className="mt-[258px] ml-[50px] w-[144px]">
            <Meter label="60 FPS (12-61)" box="bg-[#000020]" plot="bg-[#001735]" ink="text-[#00ffff]" graph={FPS} />
            <Meter label="MS" box="bg-[#002000]" plot="bg-[#003300]" ink="text-[#00ff00]" graph="" />
            <Meter label="15 MS (1-79)" box="bg-[#002000]" plot="bg-[#003300]" ink="text-[#00ff00]" graph={MS} />
          </div>
        </aside>
      </div>
    </div>
  );
}
